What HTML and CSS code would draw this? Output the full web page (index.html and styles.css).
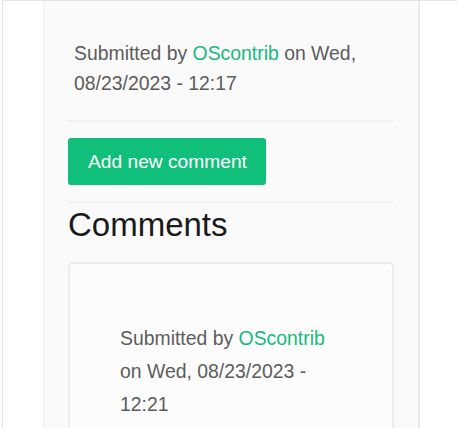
FILE: index.html
```html
<!DOCTYPE html>
<html>
<head>
<meta charset="utf-8">
<link rel="stylesheet" href="styles.css">
</head>
<body>
<div class="page">
  <main class="column">
    <div class="meta">
      Submitted by <a class="user" href="#">OScontrib</a> on Wed, 08/23/2023 - 12:17
    </div>
    <hr class="rule">
    <a class="btn" href="#">Add new comment</a>
    <hr class="rule rule-2">
    <h2 class="heading">Comments</h2>
    <article class="comment">
      <div class="comment-meta">
        Submitted by <a class="user" href="#">OScontrib</a> on Wed, 08/23/2023 - 12:21
      </div>
    </article>
  </main>
</div>
</body>
</html>
```

FILE: styles.css
```css
html, body {
  margin: 0;
  padding: 0;
  background: #ffffff;
  height: 100%;
  overflow: hidden;
}
body {
  font-family: "Liberation Sans", Arial, sans-serif;
}
.page {
  margin-left: 2px;
  border-top: 1px solid #e3e3e3;
  border-left: 1px solid #e3e3e3;
  height: 100%;
  box-sizing: border-box;
  padding-left: 40px;
}
.column {
  height: 100%;
  background: #fafafa;
  border-left: 1px solid #efefef;
  border-right: 2px solid #e8e8e8;
  padding: 0 24px 0 24px;
  margin: 0;
  box-sizing: border-box;
  width: 377px;
}
.meta {
  padding: 37px 0 0 6px;
  font-size: 19.4px;
  line-height: 30px;
  color: #5c5c5c;
}
.user {
  color: #18b980;
  text-decoration: none;
}
.rule {
  border: 0;
  height: 2px;
  background: #f2f2f2;
  margin: 22px 0 0 0;
}
.btn {
  display: inline-block;
  margin-top: 16px;
  background: #10bf7a;
  color: #ffffff;
  text-decoration: none;
  font-size: 19.2px;
  line-height: 47px;
  height: 47px;
  padding: 0 19px 0 20px;
  border-radius: 3px;
}
.rule-2 {
  margin-top: 16px;
}
.heading {
  margin: 0;
  font-weight: normal;
  font-size: 33px;
  line-height: 43px;
  color: #1a1a1a;
}
.comment {
  margin-top: 16px;
  border: 2px solid #ececec;
  border-radius: 5px;
  background: #fcfcfc;
  padding: 58px 20px 40px 50px;
  height: 300px;
}
.comment-meta {
  font-size: 19.4px;
  line-height: 33px;
  color: #5c5c5c;
  width: 215px;
}
```
